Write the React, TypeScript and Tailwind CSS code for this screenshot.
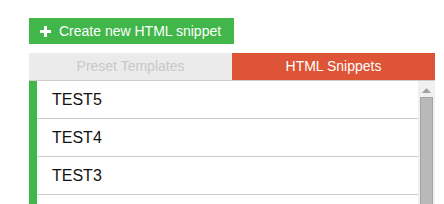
import React from "react";

export default function App() {
  const items = ["TEST5", "TEST4", "TEST3"];
  return (
    <div className="w-[444px] h-[204px] bg-white overflow-hidden" style={{ fontFamily: '"Liberation Sans", Arial, sans-serif' }}>
      <div className="pl-[29px] pt-[18px]">
        <button className="flex items-center h-[26px] w-[205px] bg-[#41b649] text-white text-[14px] pl-[11px]">
          <svg width="11" height="11" viewBox="0 0 11 11" className="mr-[8px]">
            <rect x="4" y="0" width="3" height="11" fill="white" />
            <rect x="0" y="4" width="11" height="3" fill="white" />
          </svg>
          <span>Create new HTML snippet</span>
        </button>
        <div className="mt-[9px] w-[406px]">
          <div className="flex h-[28px] border-b border-[#cccccc]">
            <div className="w-[203px] bg-[#ebebeb] text-[#c8c8c8] text-[14px] flex items-center justify-center">Preset Templates</div>
            <div className="flex-1 bg-[#dd5437] text-white text-[14px] flex items-center justify-center">HTML Snippets</div>
          </div>
          <div className="flex h-[130px]">
            <div className="w-[8px] bg-[#41b649]" />
            <div className="flex-1 flex flex-col">
              {items.map((t) => (
                <div key={t} className="h-[38px] shrink-0 border-b border-[#cccccc] flex items-center pl-[15px] text-[16px] text-[#111111]">
                  {t}
                </div>
              ))}
            </div>
            <div className="w-[17px] bg-[#f0f0f0] flex flex-col items-center">
              <svg width="9" height="5" viewBox="0 0 9 5" className="mt-[7px]">
                <polygon points="4.5,0 9,5 0,5" fill="#a3a3a3" />
              </svg>
              <div className="mt-[4px] w-[13px] flex-1 bg-[#b9b9b9] border border-[#a4a4a4]" />
            </div>
          </div>
        </div>
      </div>
    </div>
  );
}
